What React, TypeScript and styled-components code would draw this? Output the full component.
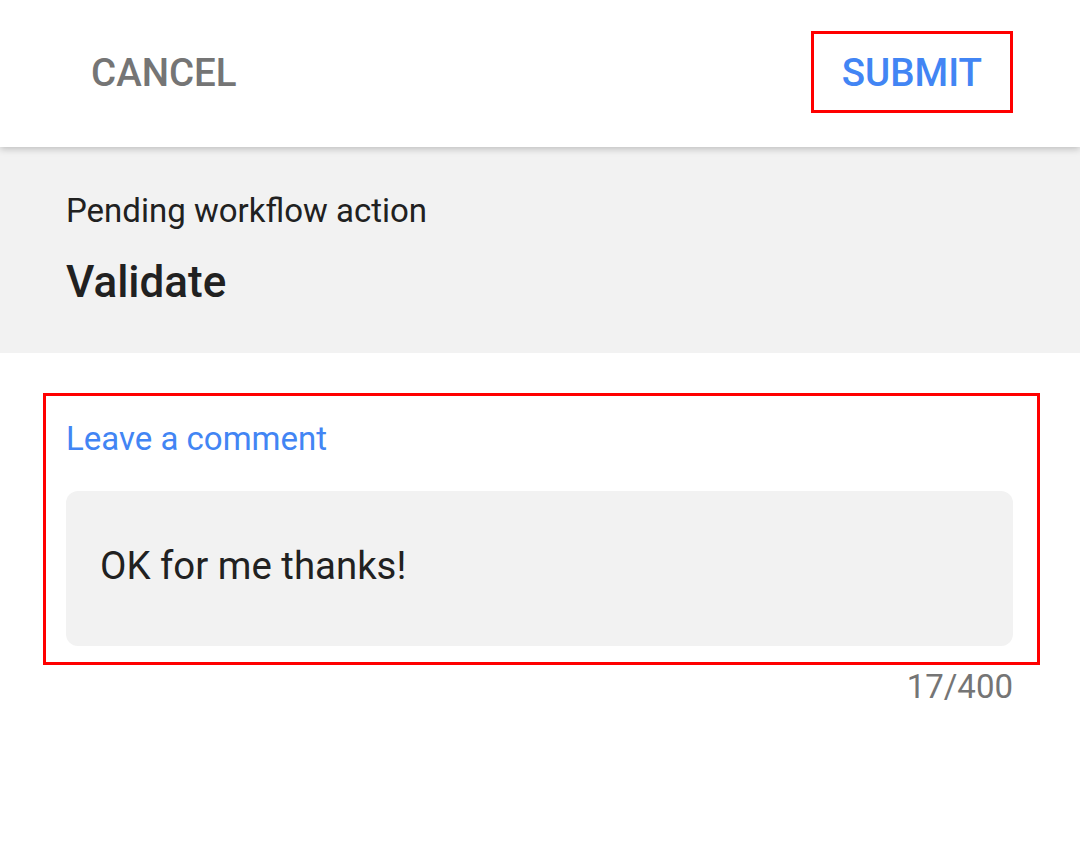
import styled, { createGlobalStyle } from 'styled-components';

const GlobalStyle = createGlobalStyle`
  html, body {
    margin: 0;
    padding: 0;
    background: #ffffff;
    font-family: Roboto, "Noto Sans", "Liberation Sans", sans-serif;
    color: #212121;
  }
  * {
    box-sizing: border-box;
  }
`

type ActionButtonProps = {
  $primary? : boolean,
  $highlight? : boolean,
}

const Page = styled.div`
  width: 100%;
  min-height: 847px;
  background: #ffffff;
`

const Toolbar = styled.header`
  position: relative;
  z-index: 1;
  display: flex;
  justify-content: space-between;
  align-items: flex-start;
  height: 147px;
  padding: 31px 67px 0 60px;
  background: #ffffff;
  box-shadow: 0 2px 7px rgba(0, 0, 0, 0.22);
`

const ActionButton = styled.button<ActionButtonProps>`
  display: flex;
  align-items: center;
  justify-content: center;
  height: 82px;
  padding: 0 31px;
  border: none;
  background: transparent;
  font-family: inherit;
  font-size: 38.5px;
  font-weight: 500;
  letter-spacing: 0;
  text-transform: uppercase;
  color: ${({ $primary }) => $primary ? '#4285f4' : '#757575'};
  outline: ${({ $highlight }) => $highlight ? '3px solid #ff0000' : 'none'};
  outline-offset: -3px;
  cursor: pointer;
`

const ActionSummary = styled.section`
  display: flex;
  flex-direction: column;
  gap: 25px;
  padding: 44px 66px 45px;
  background: #f2f2f2;
`

const SummaryLabel = styled.div`
  font-size: 33px;
  line-height: 40px;
  color: #212121;
`

const SummaryTitle = styled.h1`
  margin: 0;
  font-size: 44px;
  line-height: 52px;
  font-weight: 500;
  color: #212121;
`

const CommentArea = styled.section`
  margin: 40px 40px 0 43px;
`

const CommentField = styled.div`
  display: flex;
  flex-direction: column;
  gap: 32px;
  padding: 26px 27px 19px 23px;
  outline: 3px solid #ff0000;
  outline-offset: -3px;
`

const CommentLabel = styled.label`
  font-size: 33px;
  line-height: 40px;
  color: #4285f4;
`

const CommentInput = styled.textarea`
  display: block;
  width: 100%;
  height: 155px;
  padding: 51px 34px 0;
  border: none;
  border-radius: 12px;
  background: #f2f2f2;
  font-family: inherit;
  font-size: 38.4px;
  line-height: 47px;
  color: #212121;
  resize: none;
  overflow: hidden;
  &:focus {
    outline: none;
  }
`

const CharCounter = styled.div`
  margin-top: 2px;
  padding-right: 27px;
  text-align: right;
  font-size: 33px;
  line-height: 40px;
  color: #757575;
`

const comment = 'OK for me thanks!';

export default function App() {
  return (
    <Page>
      <GlobalStyle />
      <Toolbar>
        <ActionButton>Cancel</ActionButton>
        <ActionButton $primary $highlight>Submit</ActionButton>
      </Toolbar>
      <ActionSummary>
        <SummaryLabel>Pending workflow action</SummaryLabel>
        <SummaryTitle>Validate</SummaryTitle>
      </ActionSummary>
      <CommentArea>
        <CommentField>
          <CommentLabel htmlFor="comment">Leave a comment</CommentLabel>
          <CommentInput id="comment" defaultValue={comment} readOnly />
        </CommentField>
        <CharCounter>{comment.length}/400</CharCounter>
      </CommentArea>
    </Page>
  )
}
